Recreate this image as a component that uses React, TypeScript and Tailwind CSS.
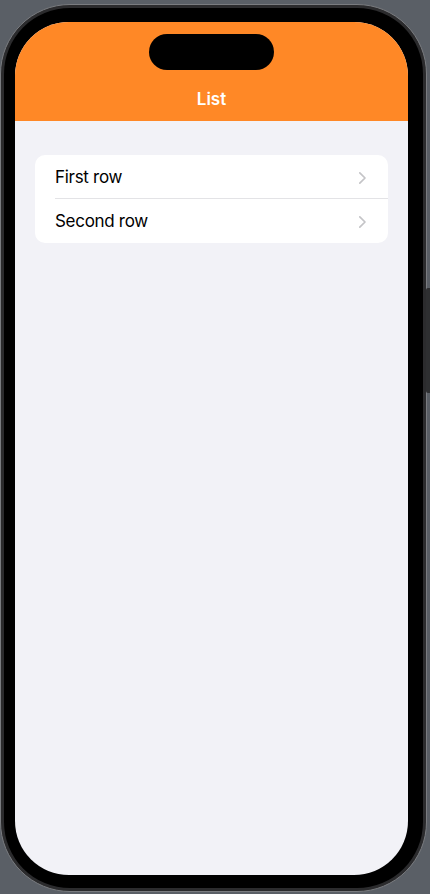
const font = { fontFamily: "Inter, 'Noto Sans', sans-serif" };

function Chevron() {
  return (
    <svg width="9" height="14" viewBox="0 0 9 14" fill="none">
      <path d="M1.8 1.8L7 7L1.8 12.2" stroke="#C4C4C7" strokeWidth="1.7" strokeLinecap="round" strokeLinejoin="round" />
    </svg>
  );
}

function Row({ label, last }: { label: string; last?: boolean }) {
  return (
    <div className="flex h-[44px] items-center pl-[20px]">
      <div
        className={
          "flex h-full flex-1 items-center justify-between pr-[21px] pt-[2px] " +
          (last ? "" : "border-b border-[#e3e3e6]")
        }
      >
        <span className="text-[17px] tracking-[-0.3px] text-black">{label}</span>
        <Chevron />
      </div>
    </div>
  );
}

export default function App() {
  return (
    <div className="relative h-[894px] w-[430px] overflow-hidden bg-[#5a5f66]" style={font}>
      <div className="absolute right-0 top-[288px] h-[105px] w-[4px] rounded-l-[2px] bg-[#2e2f31]" />
      <div className="pt-[4px]">
        <div className="h-[888px] w-[427px] rounded-[70px] border border-[#7a7c80] bg-[#2b2b2d] p-[3px]">
          <div className="h-full w-full rounded-[66px] bg-black pb-[13px] pl-[11px] pr-[15px] pt-[14px]">
            <div className="flex h-full w-full flex-col overflow-hidden rounded-[54px] bg-[#f2f2f7]">
              <div className="flex h-[99px] flex-col items-center bg-[#ff8826] pt-[12px]">
                <div className="h-[36px] w-[125px] rounded-full bg-black" />
                <div className="mt-[8px] flex h-[44px] items-center justify-center">
                  <span className="text-[17px] font-semibold text-white">List</span>
                </div>
              </div>
              <div className="mx-[20px] mt-[34px] overflow-hidden rounded-[10px] bg-white">
                <Row label="First row" />
                <Row label="Second row" last />
              </div>
            </div>
          </div>
        </div>
      </div>
    </div>
  );
}
